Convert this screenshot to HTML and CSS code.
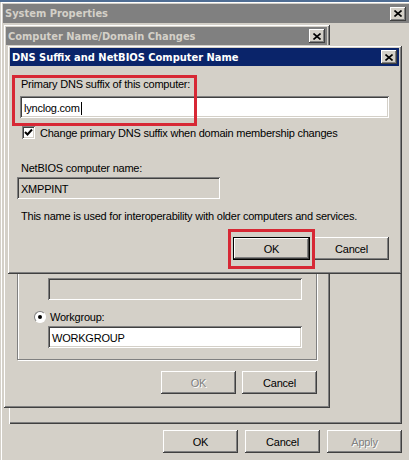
FILE: index.html
```html
<!DOCTYPE html>
<html>
<head>
<meta charset="utf-8">
<link rel="stylesheet" href="styles.css">
</head>
<body>
<div class="strip"></div>

<div class="win sp">
  <div class="title inactive sp-title">
    <span class="caption">System Properties</span>
    <span class="xbtn"><svg width="8" height="7" viewBox="0 0 8 7"><path d="M0.5 0.5 L7.5 6.5 M7.5 0.5 L0.5 6.5" stroke="#000" stroke-width="1.6" fill="none"/></svg></span>
  </div>
  <div class="sp-body">
    <div class="tabpage"></div>
    <div class="btnrow sp-btns">
      <div class="btn">OK</div>
      <div class="btn">Cancel</div>
      <div class="btn disabled">Apply</div>
    </div>
  </div>
</div>

<div class="win cn">
  <div class="title inactive">
    <span class="caption">Computer Name/Domain Changes</span>
    <span class="xbtn"><svg width="8" height="7" viewBox="0 0 8 7"><path d="M0.5 0.5 L7.5 6.5 M7.5 0.5 L0.5 6.5" stroke="#000" stroke-width="1.6" fill="none"/></svg></span>
  </div>
  <div class="cn-body">
    <div class="groupbox">
      <div class="field ro wg"></div>
      <div class="radio-row"><span class="radio"><span class="dot"></span></span><span>Workgroup:</span></div>
      <div class="field wg wg2">WORKGROUP</div>
    </div>
    <div class="btnrow cn-btns">
      <div class="btn disabled">OK</div>
      <div class="btn">Cancel</div>
    </div>
  </div>
</div>

<div class="win dns">
  <div class="title active">
    <span class="caption">DNS Suffix and NetBIOS Computer Name</span>
    <span class="xbtn"><svg width="8" height="7" viewBox="0 0 8 7"><path d="M0.5 0.5 L7.5 6.5 M7.5 0.5 L0.5 6.5" stroke="#000" stroke-width="1.6" fill="none"/></svg></span>
  </div>
  <div class="dns-body">
    <div class="label l1">Primary DNS suffix of this computer:</div>
    <div class="field dnsfield"><span>lynclog.com</span><span class="caret"></span></div>
    <div class="check-row"><span class="checkbox"><svg width="9" height="9" viewBox="0 0 9 9"><path d="M1 4 L3.5 6.5 L8 1.5" stroke="#000" stroke-width="2" fill="none"/></svg></span><span>Change primary DNS suffix when domain membership changes</span></div>
    <div class="label l2">NetBIOS computer name:</div>
    <div class="field ro nb">XMPPINT</div>
    <div class="label l3">This name is used for interoperability with older computers and services.</div>
    <div class="btnrow dns-btns">
      <div class="btn default">OK</div>
      <div class="btn">Cancel</div>
    </div>
  </div>
</div>

<div class="redbox r1"></div>
<div class="redbox r2"></div>
</body>
</html>
```

FILE: styles.css
```css
* { box-sizing: border-box; }
html, body {
  margin: 0;
  padding: 0;
}
body {
  width: 409px;
  height: 460px;
  overflow: hidden;
  position: relative;
  background: #d4d0c8;
  font-family: "Liberation Sans", Arial, sans-serif;
  font-size: 11px;
  letter-spacing: -0.22px;
  color: #000;
}
.strip {
  position: absolute;
  left: 0; top: 0;
  width: 409px; height: 2px;
  background: #4f6d93;
  z-index: 1;
}
.win {
  position: absolute;
  background: #d4d0c8;
  padding: 3px;
  display: flex;
  flex-direction: column;
  box-shadow: inset 1px 1px #d4d0c8, inset -1px -1px #404040, inset 2px 2px #fff, inset -2px -2px #808080;
}
.sp { left: 0; top: 1px; width: 412px; height: 475px; }
.cn { left: 3px; top: 24px; width: 327px; height: 384px; z-index: 2; }
.dns { left: 7px; top: 45px; width: 395px; height: 229px; z-index: 3; }

.title {
  height: 18px;
  flex: none;
  display: flex;
  align-items: center;
  justify-content: space-between;
  padding: 0 2px 0 2px;
  font-family: "DejaVu Sans Condensed", "DejaVu Sans", sans-serif;
  font-weight: bold;
  font-size: 11px;
  letter-spacing: 0;
}
.sp-title { height: 19px; padding-right: 3px; }
.inactive { background: #808080; color: #d4d0c8; }
.active { background: #0a246a; color: #fff; }
.caption { white-space: nowrap; }
.xbtn {
  width: 16px; height: 14px;
  background: #d4d0c8;
  display: flex;
  align-items: center;
  justify-content: center;
  box-shadow: inset -1px -1px #404040, inset 1px 1px #fff, inset -2px -2px #808080;
}
.xbtn svg { display: block; }

/* System Properties */
.sp-body {
  flex: 1;
  display: flex;
  flex-direction: column;
  padding: 0 7px 0 6px;
}
.tabpage {
  margin-top: 27px;
  height: 374px;
  box-shadow: inset 1px 1px #fff, inset -1px -1px #404040, inset -2px -2px #808080;
}
.btnrow {
  display: flex;
  justify-content: flex-end;
  gap: 6px;
}
.sp-btns { margin-top: 6px; gap: 7px; }
.btn {
  width: 75px;
  height: 23px;
  display: flex;
  align-items: center;
  justify-content: center;
  background: #d4d0c8;
  box-shadow: inset -1px -1px #404040, inset 1px 1px #fff, inset -2px -2px #808080, inset 2px 2px #d4d0c8;
}
.btn.disabled { color: #808080; text-shadow: 1px 1px #fff; }
.btn.default {
  border: 1px solid #000;
  width: 77px;
}

/* Computer Name window */
.cn-body {
  flex: 1;
  display: flex;
  flex-direction: column;
  justify-content: flex-end;
  padding: 0 10px 11px 11px;
}
.groupbox {
  border: 1px solid #808080;
  box-shadow: inset 1px 1px #fff, 1px 1px #fff;
  padding: 40px 14px 11px 30px;
  display: flex;
  flex-direction: column;
}
.field {
  height: 22px;
  background: #fff;
  padding: 2px 0 0 4px;
  display: flex;
  align-items: center;
  white-space: nowrap;
  box-shadow: inset 1px 1px #808080, inset -1px -1px #fff, inset 2px 2px #404040, inset -2px -2px #d4d0c8;
}
.field.ro { background: #d4d0c8; }
.radio-row {
  display: flex;
  align-items: center;
  gap: 4px;
  height: 13px;
  margin: 10px 0 0 -14px;
}
.radio {
  width: 12px; height: 12px;
  border-radius: 50%;
  background: #fff;
  border: 1px solid;
  border-color: #808080 #fff #fff #808080;
  display: flex;
  align-items: center;
  justify-content: center;
}
.dot { width: 4px; height: 4px; border-radius: 50%; background: #000; }
.wg2 { margin-top: 3px; }
.cn-btns { margin-top: 11px; }

/* DNS dialog */
.dns-body {
  flex: 1;
  display: flex;
  flex-direction: column;
  padding: 0 10px 0 10px;
}
.label { line-height: 13px; white-space: nowrap; padding-left: 1px; }
.l1 { margin-top: 12px; }
.dnsfield { margin-top: 5px; }
.caret { width: 1px; height: 13px; background: #000; margin-left: 1px; }
.check-row {
  display: flex;
  align-items: center;
  gap: 5px;
  margin: 8px 0 0 2px;
  height: 13px;
}
.checkbox {
  width: 13px; height: 13px;
  background: #fff;
  display: flex;
  align-items: center;
  justify-content: center;
  box-shadow: inset 1px 1px #808080, inset -1px -1px #fff, inset 2px 2px #404040, inset -2px -2px #d4d0c8;
}
.checkbox svg { display: block; }
.l2 { margin-top: 23px; }
.nb { width: 203px; margin: 2px 0 0 -3px; }
.l3 { margin-top: 11px; }
.dns-btns { margin-top: 14px; gap: 4px; }

.redbox {
  position: absolute;
  border: 3px solid #d72835;
  z-index: 5;
}
.r1 { left: 12px; top: 75px; width: 185px; height: 51px; }
.r2 { left: 228px; top: 229px; width: 87px; height: 40px; }
```
